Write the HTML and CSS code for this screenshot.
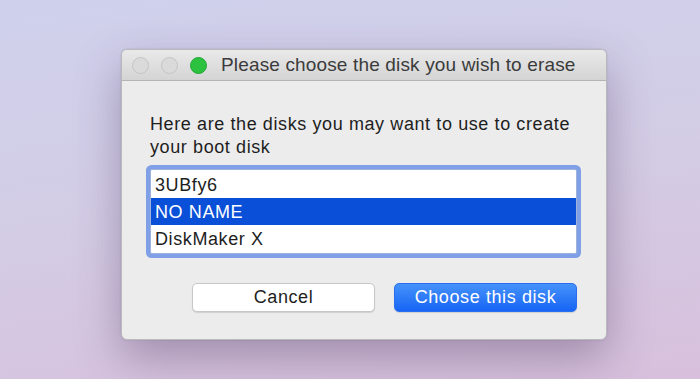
FILE: index.html
```html
<!DOCTYPE html>
<html>
<head>
<title>Please choose the disk you wish to erase</title>
<link rel="stylesheet" href="styles.css">
</head>
<body>

<div class='window'>
    <div class='titlebar'>
        <span class='light off'></span>
        <span class='light off'></span>
        <span class='light green'></span>
        <span class='title'>Please choose the disk you wish to erase</span>
    </div>

    <div class='content'>
        <p class='prompt'>Here are the disks you may want to use to create<br>your boot disk</p>

        <div class='list'>
            <div class='row'>3UBfy6</div>
            <div class='row selected'>NO NAME</div>
            <div class='row'>DiskMaker X</div>
        </div>

        <div class='buttons'>
            <button class='btn'>Cancel</button>
            <button class='btn primary'>Choose this disk</button>
        </div>
    </div>
</div>

</body>
</html>
```

FILE: styles.css
```css
html {
    height: 100%;
}

body {
    height: 100%;
    margin: 0px;
    box-sizing: border-box;
    padding: 49px 0 0 121px;
    font-family: "Liberation Sans", Arial, sans-serif;
    color: #1e1e1e;
    background: linear-gradient(172deg, #cfd1ec 0%, #d3cde6 45%, #d8c0dc 100%);
    overflow: hidden;
}

.window {
    width: 486px;
    height: 291px;
    box-sizing: border-box;
    background: #ececec;
    border: 1px solid #b9b9be;
    border-radius: 6px;
    overflow: hidden;
    box-shadow: 0 18px 45px rgba(70, 50, 90, 0.38), 0 0 2px rgba(0,0,0,0.15);
    display: flex;
    flex-flow: column;
}

/* title bar with the three window lights */
.titlebar {
    height: 31px;
    box-sizing: border-box;
    display: flex;
    align-items: center;
    padding-left: 10px;
    background: linear-gradient(#e9e9e9, #d4d4d4);
    border-bottom: 1px solid #b4b4b4;
}

.light {
    width: 17px;
    height: 17px;
    box-sizing: border-box;
    border-radius: 50%;
    margin-right: 12px;
}
.light.off {
    background: #dadada;
    border: 1px solid #c4c4c4;
}
.light.green {
    background: #2cc23f;
    border: 1px solid #22a835;
    margin-right: 14px;
}

.title {
    font-size: 19px;
    letter-spacing: 0.15px;
    color: #3b3b3b;
    white-space: nowrap;
}

.content {
    flex-grow: 1;
    padding: 32px 28px 0 28px;
}

.prompt {
    margin: 0px;
    font-size: 18px;
    letter-spacing: 0.6px;
    line-height: 23px;
}

.list {
    margin-top: 10px;
    width: 427px;
    box-sizing: border-box;
    background: #fff;
    border: 1px solid #9fb2da;
    border-radius: 2px;
    padding: 1px 0;
    box-shadow: 0 0 0 4px #7f9fe6;
}

.row {
    height: 27px;
    line-height: 28px;
    padding-left: 4px;
    font-size: 18px;
    letter-spacing: 0.6px;
    white-space: nowrap;
}
.row.selected {
    background: #0a4fd8;
    color: #fff;
}

.buttons {
    display: flex;
    justify-content: flex-end;
    gap: 19px;
    margin-top: 29px;
    width: 427px;
}

.btn {
    width: 183px;
    height: 29px;
    font-family: "Liberation Sans", Arial, sans-serif;
    font-size: 18px;
    letter-spacing: 0.6px;
    color: #1e1e1e;
    background: #fff;
    border: 1px solid #c7c7c7;
    border-radius: 5px;
    box-shadow: 0 1px 1px rgba(0,0,0,0.12);
    padding: 0px;
}
.btn.primary {
    color: #fff;
    background: linear-gradient(#4592fb, #1765f4);
    border: 1px solid #2a6ff0;
}
```
